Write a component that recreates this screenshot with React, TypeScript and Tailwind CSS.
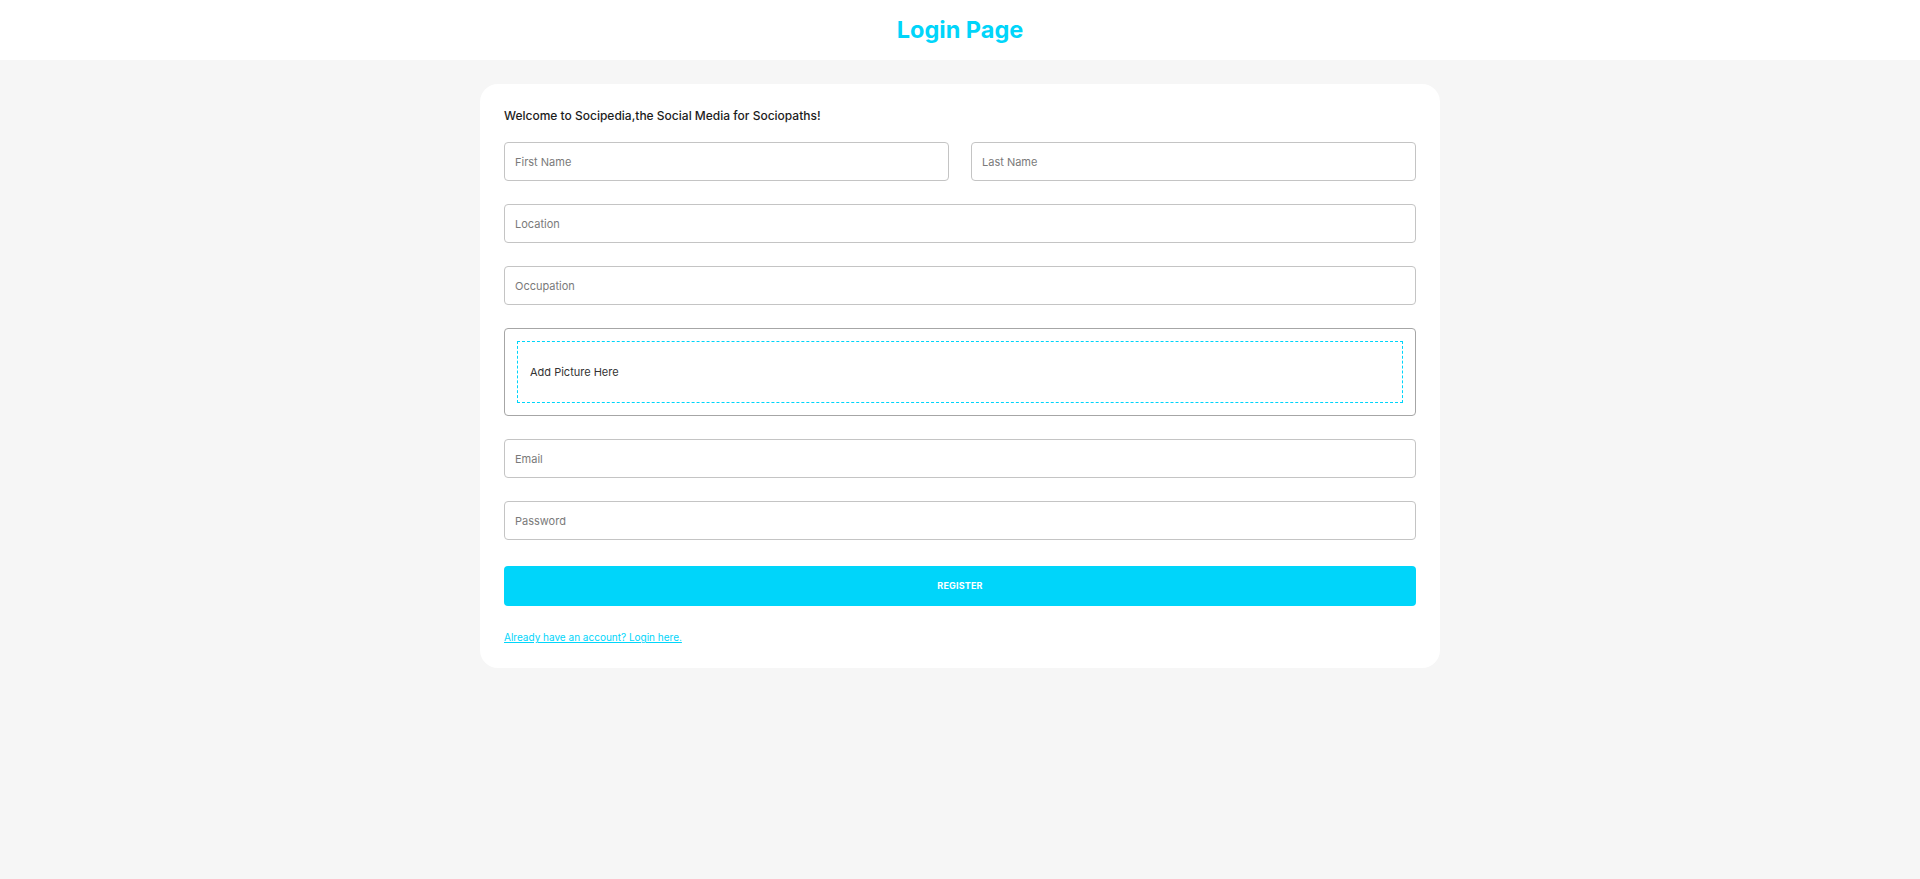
import React from "react";

const font = { fontFamily: '"Inter", "Roboto", "Liberation Sans", sans-serif' };

function Field({ placeholder, className = "" }: { placeholder: string; className?: string }) {
  return (
    <input
      placeholder={placeholder}
      className={`h-[39px] w-full rounded-[4px] border border-[#c4c4c4] bg-white px-[10px] text-[11px] text-[#333] outline-none placeholder:text-[#7a7a7a] ${className}`}
    />
  );
}

export default function App() {
  return (
    <div className="min-h-screen w-full bg-[#f6f6f6]" style={font}>
      <header className="flex h-[60px] w-full items-center justify-center bg-white">
        <h1 className="text-[23.5px] font-bold leading-none text-[#00d5fa]">Login Page</h1>
      </header>
      <main className="mx-auto mt-[24px] w-[960px] rounded-[18px] bg-white p-[24px]">
        <p className="mb-[18px] text-[12px] font-medium leading-[16px] text-[#1c1c1c]">
          Welcome to Socipedia,the Social Media for Sociopaths!
        </p>
        <form className="grid grid-cols-2 gap-x-[22px] gap-y-[23px]" onSubmit={(e) => e.preventDefault()}>
          <Field placeholder="First Name" />
          <Field placeholder="Last Name" />
          <Field placeholder="Location" className="col-span-2" />
          <Field placeholder="Occupation" className="col-span-2" />
          <div className="col-span-2 rounded-[4px] border border-[#a6a6a6] p-[12px]">
            <div className="flex h-[62px] items-center border border-dashed border-[#00d5fa] px-[12px]">
              <span className="text-[11px] text-[#333]">Add Picture Here</span>
            </div>
          </div>
          <Field placeholder="Email" className="col-span-2" />
          <Field placeholder="Password" className="col-span-2" />
        </form>
        <button className="mt-[26px] flex h-[40px] w-full items-center justify-center rounded-[4px] bg-[#00d5fa] text-[9px] font-bold tracking-[0.02em] text-white">
          REGISTER
        </button>
        <div className="mt-[22px] leading-[14px]">
          <a href="#" className="text-[10px] text-[#00d5fa] underline">
            Already have an account? Login here.
          </a>
        </div>
      </main>
    </div>
  );
}
